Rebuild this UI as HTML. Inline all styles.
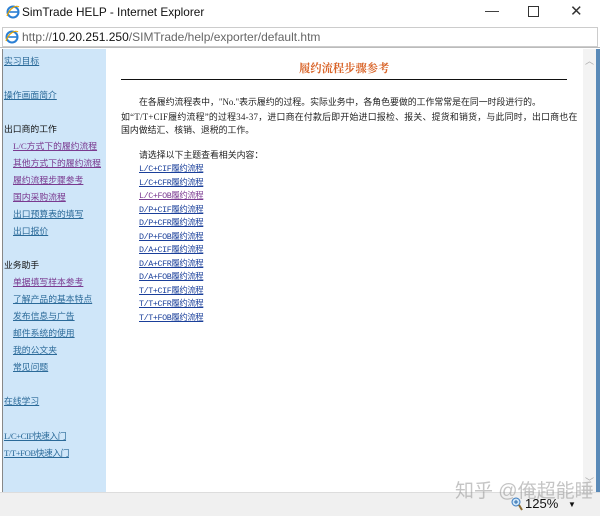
<!DOCTYPE html>
<html><head><meta charset="utf-8">
<style>
*{margin:0;padding:0;box-sizing:border-box}
body{width:600px;height:516px;overflow:hidden;background:#fff;font-family:"Liberation Sans","Noto Sans CJK SC",sans-serif;position:relative}
.abs{position:absolute;white-space:nowrap}
#title{left:0;top:0;width:600px;height:25px;background:#fff}
#addr{left:0;top:25px;width:600px;height:23px;background:#fff;border-bottom:1px solid #bbb}
#addrbox{left:2px;top:27px;width:596px;height:20px;border:1px solid #ccc}
#side{left:2px;top:49px;width:104px;height:443px;background:#cfe6f9;border-left:1px solid #888}
#scroll{left:583px;top:49px;width:13px;height:443px;background:#f3f3f3}
#edge{left:596px;top:49px;width:4px;height:443px;background:#5a8ab8}
#status{left:0;top:492px;width:600px;height:24px;background:#f0f0f0;border-top:1px solid #ddd}
.s{font-size:8.8px;color:#2b6a99;text-decoration:underline;font-family:"Liberation Serif","Noto Sans CJK SC",serif}
.sv{color:#7a3a90}
.h{font-size:8.8px;color:#111}
.p{font-size:8.9px;color:#222;font-family:"Liberation Serif","Noto Sans CJK SC",serif}
.l{font-size:8.4px;color:#1a3f9a;text-decoration:underline;font-family:"Liberation Mono","Noto Sans CJK SC",monospace;letter-spacing:-0.4px}
</style></head><body>
<div class="abs" id="title"></div>
<svg class="abs" style="left:6px;top:5px" width="14" height="14" viewBox="0 0 14 14"><circle cx="7" cy="7" r="5.5" fill="none" stroke="#2a7fd4" stroke-width="2"/><path d="M2 7h10" stroke="#2a7fd4" stroke-width="1.6"/><path d="M1 11 C4 2 11 0 13 2" fill="none" stroke="#e8a400" stroke-width="1.2"/></svg>
<div class="abs" style="left:22px;top:5px;font-size:11.8px;color:#111">SimTrade HELP - Internet Explorer</div>
<div class="abs" style="left:485px;top:2px;font-size:14px;color:#333">—</div>
<div class="abs" style="left:528px;top:6px;width:11px;height:11px;border:1px solid #333"></div>
<div class="abs" style="left:570px;top:2px;font-size:15px;color:#333">✕</div>
<div class="abs" id="addr"></div>
<div class="abs" id="addrbox"></div>
<svg class="abs" style="left:5px;top:30px" width="14" height="14" viewBox="0 0 14 14"><circle cx="7" cy="7" r="5.5" fill="none" stroke="#2a7fd4" stroke-width="2"/><path d="M2 7h10" stroke="#2a7fd4" stroke-width="1.6"/><path d="M1 11 C4 2 11 0 13 2" fill="none" stroke="#e8a400" stroke-width="1.2"/></svg>
<div class="abs" style="left:22px;top:30px;font-size:12px;color:#666">http://<span style="color:#111">10.20.251.250</span>/SIMTrade/help/exporter/default.htm</div>
<div class="abs" id="side"></div>
<div class="abs" id="scroll"></div>
<div class="abs" style="left:585px;top:54px;font-size:9px;color:#aaa">︿</div>
<div class="abs" style="left:585px;top:475px;font-size:9px;color:#aaa">﹀</div>
<div class="abs" id="edge"></div>

<div class="abs s" style="left:4px;top:54px">实习目标</div>
<div class="abs s" style="left:4px;top:88px">操作画面简介</div>
<div class="abs h" style="left:4px;top:122px">出口商的工作</div>
<div class="abs s sv" style="left:13px;top:139px">L/C方式下的履约流程</div>
<div class="abs s sv" style="left:13px;top:156px">其他方式下的履约流程</div>
<div class="abs s sv" style="left:13px;top:173px">履约流程步骤参考</div>
<div class="abs s sv" style="left:13px;top:190px">国内采购流程</div>
<div class="abs s" style="left:13px;top:207px">出口预算表的填写</div>
<div class="abs s" style="left:13px;top:224px">出口报价</div>
<div class="abs h" style="left:4px;top:258px">业务助手</div>
<div class="abs s sv" style="left:13px;top:275px">单据填写样本参考</div>
<div class="abs s" style="left:13px;top:292px">了解产品的基本特点</div>
<div class="abs s" style="left:13px;top:309px">发布信息与广告</div>
<div class="abs s" style="left:13px;top:326px">邮件系统的使用</div>
<div class="abs s" style="left:13px;top:343px">我的公文夹</div>
<div class="abs s" style="left:13px;top:360px">常见问题</div>
<div class="abs s" style="left:4px;top:394px">在线学习</div>
<div class="abs s" style="left:4px;top:429px;letter-spacing:-0.5px">L/C+CIF快速入门</div>
<div class="abs s" style="left:4px;top:446px;letter-spacing:-0.5px">T/T+FOB快速入门</div>

<div class="abs" style="left:299px;top:60px;font-size:11.3px;font-weight:bold;color:#d9652a;font-family:'Noto Serif CJK SC',serif">履约流程步骤参考</div>
<div class="abs" style="left:121px;top:79px;width:446px;height:1px;background:#111"></div>
<div class="abs p" style="left:139px;top:95px">在各履约流程表中，"No."表示履约的过程。实际业务中，各角色要做的工作常常是在同一时段进行的。</div>
<div class="abs p" style="left:121px;top:110px;letter-spacing:0.25px">如“T/T+CIF履约流程”的过程34-37，进口商在付款后即开始进口报检、报关、提货和销货，与此同时，出口商也在</div>
<div class="abs p" style="left:121px;top:123px">国内做结汇、核销、退税的工作。</div>
<div class="abs p" style="left:139px;top:148px">请选择以下主题查看相关内容：</div>
<div class="abs l" style="left:139px;top:162px">L/C+CIF履约流程</div>
<div class="abs l" style="left:139px;top:175.5px">L/C+CFR履约流程</div>
<div class="abs l" style="left:139px;top:189px;color:#7a3a90">L/C+FOB履约流程</div>
<div class="abs l" style="left:139px;top:202.5px">D/P+CIF履约流程</div>
<div class="abs l" style="left:139px;top:216px">D/P+CFR履约流程</div>
<div class="abs l" style="left:139px;top:229.5px">D/P+FOB履约流程</div>
<div class="abs l" style="left:139px;top:243px">D/A+CIF履约流程</div>
<div class="abs l" style="left:139px;top:256.5px">D/A+CFR履约流程</div>
<div class="abs l" style="left:139px;top:270px">D/A+FOB履约流程</div>
<div class="abs l" style="left:139px;top:283.5px">T/T+CIF履约流程</div>
<div class="abs l" style="left:139px;top:297px">T/T+CFR履约流程</div>
<div class="abs l" style="left:139px;top:310.5px">T/T+FOB履约流程</div>

<div class="abs" id="status"></div>
<div class="abs" style="left:455px;top:476px;font-size:19px;color:rgba(150,150,150,0.55)">知乎 @俺超能睡</div>
<svg class="abs" style="left:511px;top:497px" width="12" height="14" viewBox="0 0 12 14"><circle cx="5" cy="5" r="4" fill="#cfe6f9" stroke="#3a7bbf"/><path d="M5 3v4M3 5h4" stroke="#2a6aaa"/><path d="M8 8l3 5" stroke="#8a6a30" stroke-width="2"/></svg>
<div class="abs" style="left:525px;top:496px;font-size:13px;color:#111">125%</div>
<div class="abs" style="left:568px;top:500px;font-size:8px;color:#111">▼</div>
</body></html>
